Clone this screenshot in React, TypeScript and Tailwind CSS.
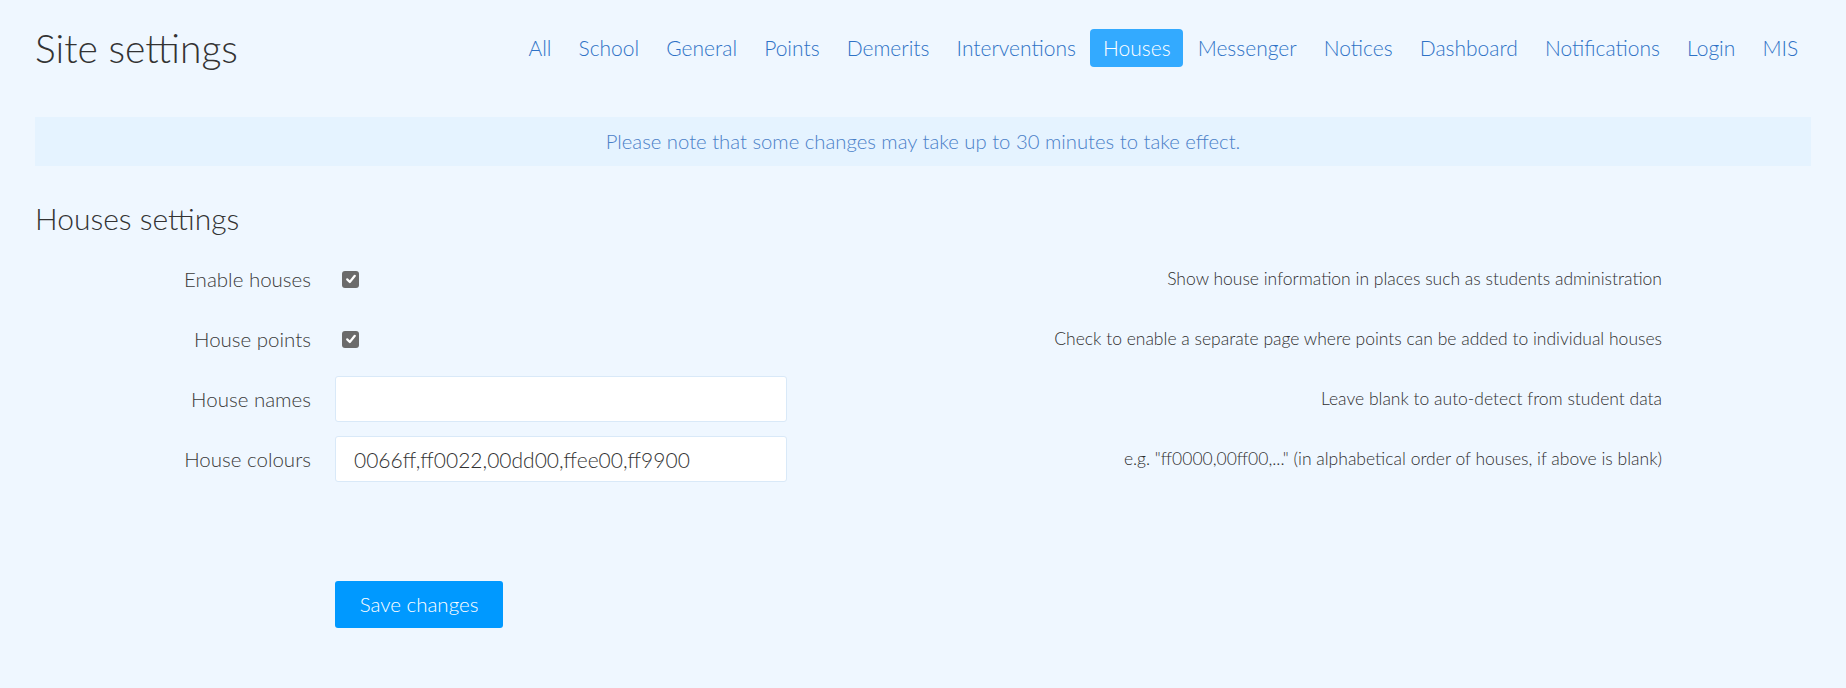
import React from "react";

const tabs = [
  "All",
  "School",
  "General",
  "Points",
  "Demerits",
  "Interventions",
  "Houses",
  "Messenger",
  "Notices",
  "Dashboard",
  "Notifications",
  "Login",
  "MIS",
];

const Check = () => (
  <div className="ml-[7px] w-[17px] h-[17px] rounded-[3px] bg-[#6b6b6b] flex items-center justify-center">
    <svg width="12" height="12" viewBox="0 0 12 12" fill="none">
      <path d="M2.2 6.4 L4.8 9 L9.8 2.8" stroke="#fff" strokeWidth="2.2" strokeLinecap="round" strokeLinejoin="round" />
    </svg>
  </div>
);

const Row = ({ label, help, children }: { label: string; help: string; children: React.ReactNode }) => (
  <div className="flex items-center h-[46px]">
    <label className="w-[276px] text-right text-[20.5px] font-light text-[#3a3a3a]">{label}</label>
    <div className="ml-[24px] w-[452px] flex items-center">{children}</div>
    <p className="flex-1 text-right pr-[149px] text-[17.5px] font-light text-[#2f2f2f]">{help}</p>
  </div>
);

export default function App() {
  return (
    <div className="min-h-screen bg-[#eff7ff] px-[35px] pt-[29px] pb-[60px] font-['Lato','Open_Sans',sans-serif]">
      {/* Header */}
      <div className="flex items-center justify-between h-[38px]">
        <h1 className="text-[39px] leading-none font-light text-[#333]">Site settings</h1>
        <nav className="flex gap-[1.5px]">
          {tabs.map((t) => (
            <a
              key={t}
              className={`h-[38px] px-[12.8px] flex items-center rounded-[4px] text-[21px] font-light ${
                t === "Houses" ? "bg-[#33aaff] text-white" : "text-[#2e72c6]"
              }`}
            >
              {t}
            </a>
          ))}
        </nav>
      </div>

      {/* Notice */}
      <div className="mt-[50px] h-[49px] bg-[#e5f3ff] flex items-center justify-center text-[20.3px] font-light text-[#4a80c8]">
        Please note that some changes may take up to 30 minutes to take effect.
      </div>

      <h3 className="mt-[37px] text-[30px] leading-none font-light text-[#333]">Houses settings</h3>

      {/* Form */}
      <div className="mt-[23px] flex flex-col gap-[14px]">
        <Row label="Enable houses" help="Show house information in places such as students administration">
          <Check />
        </Row>
        <Row label="House points" help="Check to enable a separate page where points can be added to individual houses">
          <Check />
        </Row>
        <Row label="House names" help="Leave blank to auto-detect from student data">
          <input
            className="w-full h-[46px] bg-white border border-[#d9e9f8] rounded-[3px] px-[18px] text-[21px] font-light text-[#333] outline-none"
            defaultValue=""
          />
        </Row>
        <Row label="House colours" help={'e.g. "ff0000,00ff00,..." (in alphabetical order of houses, if above is blank)'}>
          <input
            className="w-full h-[46px] bg-white border border-[#d9e9f8] rounded-[3px] px-[18px] text-[21px] font-light text-[#333] outline-none"
            defaultValue="0066ff,ff0022,00dd00,ffee00,ff9900"
          />
        </Row>
      </div>

      <button className="mt-[99px] ml-[300px] w-[168px] h-[47px] bg-[#0099ff] rounded-[3px] text-white text-[20.5px] font-light">
        Save changes
      </button>
    </div>
  );
}
